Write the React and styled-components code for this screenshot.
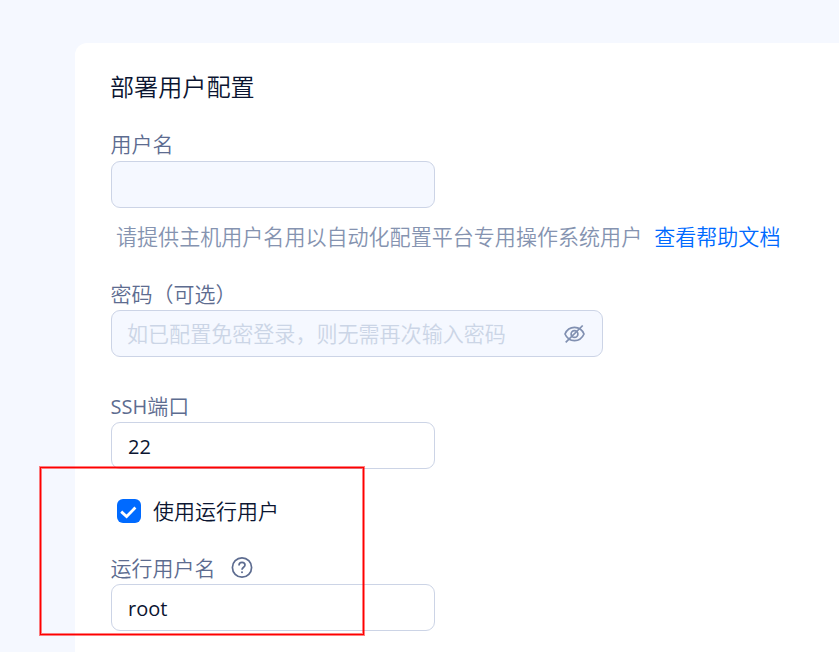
import React from "react";
import styled, { createGlobalStyle } from "styled-components";

const GlobalStyle = createGlobalStyle`
  * { box-sizing: border-box; }
  body {
    margin: 0;
    background: #f5f8ff;
    overflow: hidden;
    font-family: "Open Sans", "Noto Sans CJK SC", sans-serif;
    font-weight: 350;
  }
`;

const Page = styled.main`
  position: relative;
  width: 839px;
  height: 652px;
  padding: 43px 0 0 75px;
  overflow: hidden;
  background: #f5f8ff;
`;

const Card = styled.section`
  height: 620px;
  padding: 25px 0 0 36px;
  background: #fff;
  border-top-left-radius: 12px;
`;

const Title = styled.h1`
  margin: 0 0 24px -1px;
  height: 36px;
  font-size: 24.1px;
  line-height: 36px;
  color: #0b1531;
  font-family: "Noto Sans CJK SC", sans-serif;
  font-weight: 350;
`;

const Field = styled.div`
  margin-bottom: ${(p) => p.$gap || 0}px;
`;

const Label = styled.label`
  display: flex;
  align-items: center;
  gap: ${(p) => (p.$tight ? 0 : 15)}px;
  height: 33px;
  padding-top: ${(p) => (p.$low ? 1 : 0)}px;
  margin-left: -0.5px;
  font-size: 21px;
  line-height: 33px;
  color: #5d6c90;
  white-space: nowrap;
`;

const Latin = styled.span`
  font-size: 20px;
  font-weight: 400;
`;

const InputBox = styled.div`
  display: flex;
  align-items: center;
  justify-content: space-between;
  width: ${(p) => (p.$wide ? 492 : 324)}px;
  height: 47px;
  padding: 0 16px 0 ${(p) => (p.$wide ? 15 : 16)}px;
  border: 1px solid #ccd4e6;
  border-radius: 9px;
  background: ${(p) => (p.$filled ? "#f5f8ff" : "#fff")};
`;

const Input = styled.input`
  flex: 1;
  min-width: 0;
  padding: 2px 0 0;
  border: 0;
  outline: 0;
  background: transparent;
  font: 400 20px "Open Sans", "Noto Sans CJK SC", sans-serif;
  color: #0b1531;
  &::placeholder {
    color: #cbd5e6;
    font-size: 21.05px;
    font-weight: 350;
    opacity: 1;
  }
`;

const Hint = styled.p`
  display: flex;
  gap: 12px;
  height: 32px;
  margin: 13px 0 0 5px;
  font-size: 21.05px;
  line-height: 32px;
  color: #8593b0;
  white-space: nowrap;
`;

const HelpLink = styled.a`
  color: #006aff;
`;

const CheckRow = styled.label`
  display: flex;
  align-items: center;
  gap: 12px;
  height: 32px;
  margin: 0 0 24px 6px;
  font-size: 21px;
  line-height: 32px;
  color: #0b1531;
`;

const CheckMark = styled.span`
  display: flex;
  width: 24px;
  height: 24px;
  border-radius: 6px;
  background: #006aff;
`;

const Highlight = styled.div`
  position: absolute;
  left: 40px;
  top: 467px;
  width: 324px;
  height: 168px;
  border: 1px solid #ff0000;
  box-shadow: 0 0 0 1px rgba(255, 0, 0, 0.5), inset 0 0 0 1px rgba(255, 0, 0, 0.5);
  pointer-events: none;
`;

const EyeOffIcon = () => (
  <svg width="23" height="24" viewBox="0 0 23 24" fill="none" stroke="#8190b1" strokeWidth="1.7">
    <path d="M2 12C3.8 7.8 7.3 5.4 11.5 5.4S19.2 7.8 21 12C19.2 16.2 15.7 18.6 11.5 18.6S3.8 16.2 2 12Z" />
    <circle cx="11.5" cy="12" r="3.4" />
    <path d="M2.7 20.3 19.7 3.5" />
  </svg>
);

const HelpIcon = () => (
  <svg width="22" height="22" viewBox="0 0 22 22" fill="none" stroke="#5d6c90" strokeWidth="1.7">
    <circle cx="11" cy="10.5" r="9.6" />
    <path d="M8 8.4C8 6.5 9.3 5.4 11 5.4S14 6.5 14 8.1C14 10.2 11 10.4 11 12.8" />
    <circle cx="11" cy="15.3" r="1" fill="#5d6c90" stroke="none" />
  </svg>
);

const CheckIcon = () => (
  <svg width="24" height="24" viewBox="0 0 24 24" fill="none" stroke="#fff" strokeWidth="2.8">
    <path d="M4.2 12.6 9.6 17.6 18.4 8.6" />
  </svg>
);

export default function App() {
  return (
    <>
      <GlobalStyle />
      <Page>
        <Card>
          <Title>部署用户配置</Title>
          <Field $gap={24}>
            <Label>用户名</Label>
            <InputBox $filled>
              <Input aria-label="用户名" />
            </InputBox>
            <Hint>
              <span>请提供主机用户名用以自动化配置平台专用操作系统用户</span>
              <HelpLink>查看帮助文档</HelpLink>
            </Hint>
          </Field>
          <Field $gap={32}>
            <Label $low>密码（可选）</Label>
            <InputBox $filled $wide>
              <Input type="password" placeholder="如已配置免密登录，则无需再次输入密码" />
              <EyeOffIcon />
            </InputBox>
          </Field>
          <Field $gap={26}>
            <Label $low $tight>
              <Latin>SSH</Latin>
              <span>端口</span>
            </Label>
            <InputBox>
              <Input defaultValue="22" />
            </InputBox>
          </Field>
          <CheckRow>
            <CheckMark>
              <CheckIcon />
            </CheckMark>
            <span>使用运行用户</span>
          </CheckRow>
          <Field>
            <Label $low>
              <span>运行用户名</span>
              <HelpIcon />
            </Label>
            <InputBox>
              <Input defaultValue="root" />
            </InputBox>
          </Field>
        </Card>
        <Highlight />
      </Page>
    </>
  );
}
